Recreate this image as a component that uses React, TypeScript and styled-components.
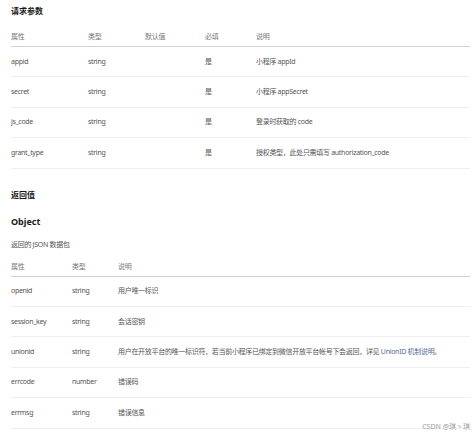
import React from "react";
import styled, { createGlobalStyle } from "styled-components";

const Global = createGlobalStyle`
  html, body { margin: 0; padding: 0; background: #fff; }
  body { font-family: "Noto Sans", "Noto Sans CJK SC", sans-serif; }
`;

const Page = styled.div`
  position: relative;
  width: 474px;
  height: 436px;
  box-sizing: border-box;
  padding: 5px 4px 0 11px;
  overflow: hidden;
`;

const Heading = styled.div<{ $mt: number; $size?: number }>`
  margin-top: ${(p) => p.$mt}px;
  font-family: "Noto Sans", "Noto Sans CJK SC", sans-serif;
  font-weight: 700;
  font-size: ${(p) => p.$size ?? 8}px;
  line-height: 12px;
  height: 12px;
  color: #1a1a1a;
`;

const Desc = styled.div`
  margin-top: 11px;
  font-size: 7px;
  letter-spacing: -0.3px;
  line-height: 12px;
  height: 12px;
  color: #555;
`;

const Table = styled.div<{ $mt: number }>`
  margin-top: ${(p) => p.$mt}px;
  width: 459px;
`;

const Row = styled.div<{ $cols: string; $head?: boolean }>`
  display: grid;
  grid-template-columns: ${(p) => p.$cols};
  align-items: center;
  box-sizing: border-box;
  height: ${(p) => (p.$head ? 19 : 30.4)}px;
  border-bottom: 1px solid ${(p) => (p.$head ? "#d2d2d2" : "#efefef")};
  font-size: 7px;
  letter-spacing: -0.3px;
  line-height: 10px;
  color: ${(p) => (p.$head ? "#777" : "#555")};
  white-space: nowrap;
`;

const Cell = styled.div``;

const Link = styled.span`
  color: #576b95;
`;

const Watermark = styled.div`
  position: absolute;
  right: 4px;
  bottom: 4px;
  font-size: 7px;
  line-height: 10px;
  color: #a0a0a0;
`;

const cols1 = "77px 57px 60px 51px 1fr";
const cols2 = "61px 46px 1fr";

const params = [
  ["appid", "string", "", "是", "小程序 appId"],
  ["secret", "string", "", "是", "小程序 appSecret"],
  ["js_code", "string", "", "是", "登录时获取的 code"],
  ["grant_type", "string", "", "是", "授权类型，此处只需填写 authorization_code"],
];

const returns: [string, string, React.ReactNode][] = [
  ["openid", "string", "用户唯一标识"],
  ["session_key", "string", "会话密钥"],
  [
    "unionid",
    "string",
    <>
      用户在开放平台的唯一标识符，若当前小程序已绑定到微信开放平台帐号下会返回，详见 <Link>UnionID 机制说明</Link>。
    </>,
  ],
  ["errcode", "number", "错误码"],
  ["errmsg", "string", "错误信息"],
];

export default function App() {
  return (
    <Page>
      <Global />
      <Heading $mt={0}>请求参数</Heading>
      <Table $mt={11}>
        <Row $cols={cols1} $head>
          <Cell>属性</Cell>
          <Cell>类型</Cell>
          <Cell>默认值</Cell>
          <Cell>必填</Cell>
          <Cell>说明</Cell>
        </Row>
        {params.map((r) => (
          <Row $cols={cols1} key={r[0]}>
            {r.map((c, i) => (
              <Cell key={i}>{c}</Cell>
            ))}
          </Row>
        ))}
      </Table>
      <Heading $mt={20}>返回值</Heading>
      <Heading $mt={15} $size={9}>Object</Heading>
      <Desc>返回的 JSON 数据包</Desc>
      <Table $mt={7}>
        <Row $cols={cols2} $head>
          <Cell>属性</Cell>
          <Cell>类型</Cell>
          <Cell>说明</Cell>
        </Row>
        {returns.map((r) => (
          <Row $cols={cols2} key={r[0]}>
            <Cell>{r[0]}</Cell>
            <Cell>{r[1]}</Cell>
            <Cell>{r[2]}</Cell>
          </Row>
        ))}
      </Table>
      <Watermark>CSDN @琪丶琪</Watermark>
    </Page>
  );
}
